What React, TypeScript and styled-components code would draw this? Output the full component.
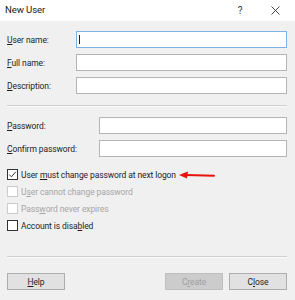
import React from "react";
import styled, { createGlobalStyle } from "styled-components";

const Global = createGlobalStyle`
  html, body { margin: 0; padding: 0; background: #f0f0f0; }
  * { box-sizing: border-box; }
`;

const Window = styled.div`
  width: 295px;
  height: 300px;
  background: #f0f0f0;
  font-family: Roboto, "Liberation Sans", sans-serif;
  font-size: 8.5px;
  letter-spacing: -0.1px;
  color: #1e1e1e;
  display: flex;
  flex-direction: column;
  overflow: hidden;
`;

const TitleBar = styled.div`
  height: 21px;
  background: #ffffff;
  display: flex;
  align-items: center;
  padding-left: 5px;
`;

const Title = styled.div`
  flex: 1;
  font-size: 9.6px;
  color: #1a1a1a;
  margin-top: -2px;
`;

const TitleButton = styled.div<{ $w: number }>`
  width: ${(p) => p.$w}px;
  height: 21px;
  display: flex;
  align-items: center;
  justify-content: center;
  font-size: 10px;
  color: #333;
`;

const Body = styled.div`
  flex: 1;
  padding: 10px 8px 0 7px;
  display: flex;
  flex-direction: column;
`;

const FieldRow = styled.div<{ $label: number; $gap?: number }>`
  display: flex;
  align-items: center;
  margin-top: ${(p) => p.$gap ?? 0}px;
  & > label {
    width: ${(p) => p.$label}px;
    flex: none;
  }
`;

const Input = styled.div<{ $focused?: boolean }>`
  flex: 1;
  height: 17px;
  background: #fff;
  border: 1px solid ${(p) => (p.$focused ? "#7fb2e5" : "#b4b4b4")};
  position: relative;
`;

const Caret = styled.span`
  position: absolute;
  left: 2px;
  top: 3px;
  width: 1px;
  height: 9px;
  background: #222;
`;

const Separator = styled.div<{ $top: number }>`
  height: 1px;
  background: #cfcfcf;
  margin-top: ${(p) => p.$top}px;
  box-shadow: 0 1px 0 #fafafa;
`;

const CheckRow = styled.div<{ $gap: number; $disabled?: boolean }>`
  display: flex;
  align-items: center;
  height: 11px;
  margin-top: ${(p) => p.$gap}px;
  color: ${(p) => (p.$disabled ? "#a6a6a6" : "#1e1e1e")};
`;

const Box = styled.div<{ $disabled?: boolean }>`
  width: 11px;
  height: 11px;
  flex: none;
  border: 1px solid ${(p) => (p.$disabled ? "#cccccc" : "#333333")};
  background: #fff;
  margin-right: 3px;
  display: flex;
  align-items: center;
  justify-content: center;
`;

const Arrow = styled.svg`
  margin-left: 3px;
  margin-top: 1px;
`;

const Spacer = styled.div`
  flex: 1;
`;

const ButtonRow = styled.div`
  display: flex;
  margin-top: 16px;
  margin-bottom: 10px;
  gap: 6px;
`;

const Button = styled.div<{ $disabled?: boolean }>`
  width: 58px;
  height: 17px;
  display: flex;
  align-items: center;
  justify-content: center;
  background: ${(p) => (p.$disabled ? "#cccccc" : "#e1e1e1")};
  border: 1px solid ${(p) => (p.$disabled ? "#bfbfbf" : "#adadad")};
  color: ${(p) => (p.$disabled ? "#a0a0a0" : "#1e1e1e")};
`;

const Push = styled.div`
  flex: 1;
`;

const U = styled.span`
  text-decoration: underline;
  text-decoration-thickness: 0.7px;
  text-underline-offset: 1px;
`;

export default function App() {
  return (
    <Window>
      <Global />
      <TitleBar>
        <Title>New User</Title>
        <TitleButton $w={30}>?</TitleButton>
        <TitleButton $w={40}>
          <svg width="9" height="9" viewBox="0 0 9 9">
            <path d="M0.5 0.5 L8.5 8.5 M8.5 0.5 L0.5 8.5" stroke="#333" strokeWidth="0.9" />
          </svg>
        </TitleButton>
      </TitleBar>
      <Body>
        <FieldRow $label={69}>
          <label><U>U</U>ser name:</label>
          <Input $focused><Caret /></Input>
        </FieldRow>
        <FieldRow $label={69} $gap={6}>
          <label><U>F</U>ull name:</label>
          <Input />
        </FieldRow>
        <FieldRow $label={69} $gap={6}>
          <label><U>D</U>escription:</label>
          <Input />
        </FieldRow>
        <Separator $top={11} />
        <FieldRow $label={92} $gap={11}>
          <label><U>P</U>assword:</label>
          <Input />
        </FieldRow>
        <FieldRow $label={92} $gap={6}>
          <label><U>C</U>onfirm password:</label>
          <Input />
        </FieldRow>
        <CheckRow $gap={12}>
          <Box>
            <svg width="9" height="9" viewBox="0 0 9 9">
              <path d="M1.2 4.6 L3.4 6.8 L7.8 1.8" stroke="#333" strokeWidth="1" fill="none" />
            </svg>
          </Box>
          <span>User <U>m</U>ust change password at next logon</span>
          <Arrow width="36" height="8" viewBox="0 0 36 8">
            <path d="M7 4 L35 4.8" stroke="#e8120c" strokeWidth="2" strokeLinecap="round" />
            <path d="M0 4 L9 0.5 L8 7.5 Z" fill="#e8120c" />
          </Arrow>
        </CheckRow>
        <CheckRow $gap={6} $disabled>
          <Box $disabled />
          <span>U<U>s</U>er cannot change password</span>
        </CheckRow>
        <CheckRow $gap={6} $disabled>
          <Box $disabled />
          <span>Pass<U>w</U>ord never expires</span>
        </CheckRow>
        <CheckRow $gap={6}>
          <Box />
          <span>Account is disa<U>b</U>led</span>
        </CheckRow>
        <Spacer />
        <Separator $top={0} />
        <ButtonRow>
          <Button><U>H</U>elp</Button>
          <Push />
          <Button $disabled>C<U>r</U>eate</Button>
          <Button>C<U>l</U>ose</Button>
        </ButtonRow>
      </Body>
    </Window>
  );
}
